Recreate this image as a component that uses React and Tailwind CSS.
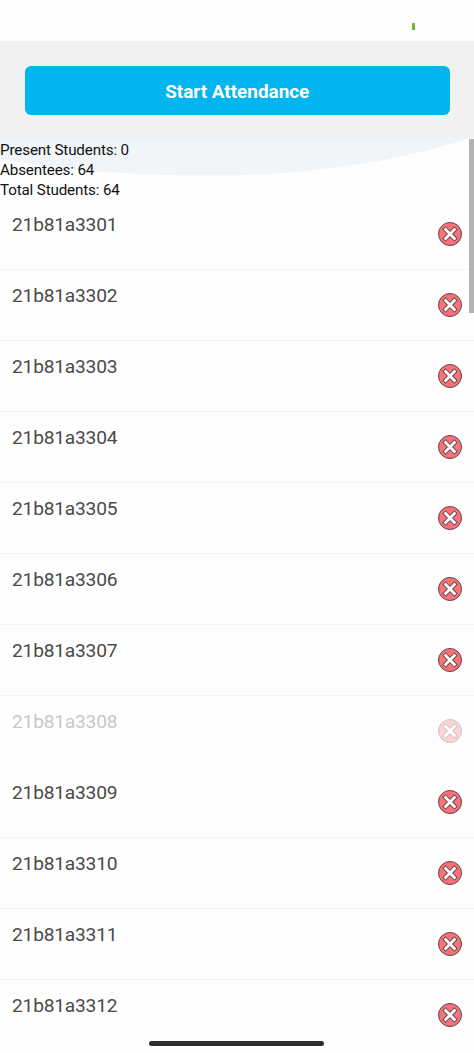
const students = Array.from({ length: 12 }, (_, i) => `21b81a33${String(i + 1).padStart(2, "0")}`);
const PRESSED = "21b81a3308";

function AbsentIcon() {
  return (
    <svg viewBox="0 0 24 24" className="w-6 h-6" fill="none">
      <circle cx="12" cy="12" r="11.5" fill="#fb7179" stroke="#5c4747" strokeWidth="1" />
      <path d="M7.6 7.6L16.4 16.4M16.4 7.6L7.6 16.4" stroke="#5c4747" strokeWidth="4.6" strokeLinecap="square" />
      <path d="M7.6 7.6L16.4 16.4M16.4 7.6L7.6 16.4" stroke="#fff" strokeWidth="2.8" strokeLinecap="square" />
    </svg>
  );
}

function StudentRow({ id }) {
  const pressed = id === PRESSED;
  return (
    <li className={pressed ? "h-[71px] px-3 pt-3 flex justify-between opacity-30" : "h-[71px] px-3 pt-3 flex justify-between border-b border-[#f3f3f3] last:border-b-0"}>
      <span className="text-[19.2px] leading-7 tracking-[-0.22px] text-[#4a4a4a]">{id}</span>
      <span className="pt-[11px]">
        <AbsentIcon />
      </span>
    </li>
  );
}

export default function App() {
  return (
    <div className="relative w-full h-[1053px] overflow-hidden bg-[#fefefe] flex flex-col font-[Roboto,sans-serif]">
      <div className="h-[41px] shrink-0 flex justify-end pr-[59px] pt-[23px]">
        <span className="w-[3px] h-[7px] bg-[#6fba3c]" />
      </div>

      <header className="h-[97px] shrink-0 bg-[#f1f1f1] pl-[24.5px] pr-6 pt-[24.5px]">
        <button className="w-full h-[49.5px] rounded-md bg-[#03b5ee] text-white text-[18.9px] font-bold pt-[3px]">
          Start Attendance
        </button>
      </header>

      <main className="relative flex-1">
        {/* curved backdrop behind the totals */}
        <svg className="absolute left-0 top-0 w-full h-[40px]" viewBox="0 0 474 40">
          <path d="M0 0H470C395 25 300 37.5 215 37.5C130 37.5 60 32 0 21Z" fill="#f1f5f8" />
        </svg>

        <div className="relative pt-[2px] h-[61px] text-[15.2px] leading-[20px] tracking-[-0.15px] text-[#111]">
          <p>Present Students: 0</p>
          <p>Absentees: 64</p>
          <p>Total Students: 64</p>
        </div>

        <ul className="relative">
          {students.map((id) => (
            <StudentRow key={id} id={id} />
          ))}
        </ul>

        <div className="absolute right-0 top-[1px] w-[5px] h-[174px] bg-[#b3b3b3]" />
      </main>

      <div className="absolute left-[149px] bottom-[7px] w-[175px] h-[5px] rounded-full bg-[#2c2e2e]" />
    </div>
  );
}
